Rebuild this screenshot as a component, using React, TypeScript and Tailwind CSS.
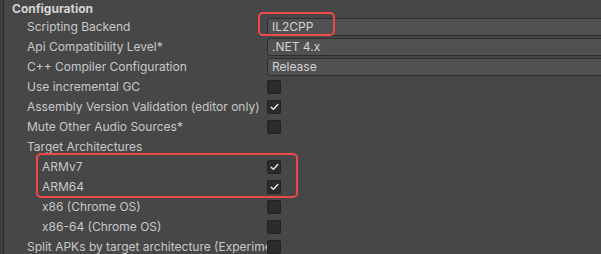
import React from 'react';

type Row =
  | { kind: 'dropdown'; label: string; value: string; indent?: boolean }
  | { kind: 'check'; label: string; checked: boolean; indent?: boolean }
  | { kind: 'label'; label: string; indent?: boolean };

const rows: Row[] = [
  { kind: 'dropdown', label: 'Scripting Backend', value: 'IL2CPP' },
  { kind: 'dropdown', label: 'Api Compatibility Level*', value: '.NET 4.x' },
  { kind: 'dropdown', label: 'C++ Compiler Configuration', value: 'Release' },
  { kind: 'check', label: 'Use incremental GC', checked: false },
  { kind: 'check', label: 'Assembly Version Validation (editor only)', checked: true },
  { kind: 'check', label: 'Mute Other Audio Sources*', checked: false },
  { kind: 'label', label: 'Target Architectures' },
  { kind: 'check', label: 'ARMv7', checked: true, indent: true },
  { kind: 'check', label: 'ARM64', checked: true, indent: true },
  { kind: 'check', label: 'x86 (Chrome OS)', checked: false, indent: true },
  { kind: 'check', label: 'x86-64 (Chrome OS)', checked: false, indent: true },
  { kind: 'check', label: 'Split APKs by target architecture (Experimental)', checked: false },
];

const Checkbox: React.FC<{ checked: boolean }> = ({ checked }) => (
  <div className="w-[14px] h-[14px] rounded-[2px] bg-[#2b2b2b] border border-[#222222] flex items-center justify-center">
    {checked && (
      <svg width="9" height="8" viewBox="0 0 9 8" fill="none">
        <path d="M1.2 4.3 L3.4 6.3 L7.8 1.6" stroke="#e6e6e6" strokeWidth="1.5" strokeLinecap="round" strokeLinejoin="round" />
      </svg>
    )}
  </div>
);

const App: React.FC = () => {
  return (
    <div
      className="relative w-[601px] h-[254px] overflow-hidden bg-[#474747] flex text-[12px] text-[#c8c8c8]"
      style={{ fontFamily: 'Inter, "Noto Sans", sans-serif' }}
    >
      <div className="w-[4px] shrink-0 bg-[#3e3e3e] border-r border-[#2a2a2a]" />
      <div className="flex-1 flex flex-col">
        <div className="h-[17px] pl-[8px] flex items-center font-bold text-[#d4d4d4] leading-[16px] shrink-0">
          Configuration
        </div>
        {rows.map((row, i) => (
          <div key={i} className="h-[20px] flex items-center shrink-0">
            <div
              className={`w-[263px] shrink-0 overflow-hidden whitespace-nowrap leading-[16px] ${
                row.indent ? 'pl-[38px]' : 'pl-[23px]'
              }`}
            >
              {row.label}
            </div>
            {row.kind === 'dropdown' && (
              <div className="flex-1 h-[18px] -mr-[10px] rounded-[3px] bg-[#515151] border border-[#2e2e2e] flex items-center pl-[4px] text-[#d2d2d2] leading-[16px]">
                {row.value}
              </div>
            )}
            {row.kind === 'check' && <Checkbox checked={row.checked} />}
          </div>
        ))}
      </div>

      <div className="absolute left-[258px] top-[12px] w-[77px] h-[24px] rounded-[5px] border-[2.5px] border-[#ee4848] pointer-events-none" />
      <div className="absolute left-[36px] top-[153px] w-[262px] h-[45px] rounded-[5px] border-[2.5px] border-[#ee4848] pointer-events-none" />
    </div>
  );
};

export default App;
